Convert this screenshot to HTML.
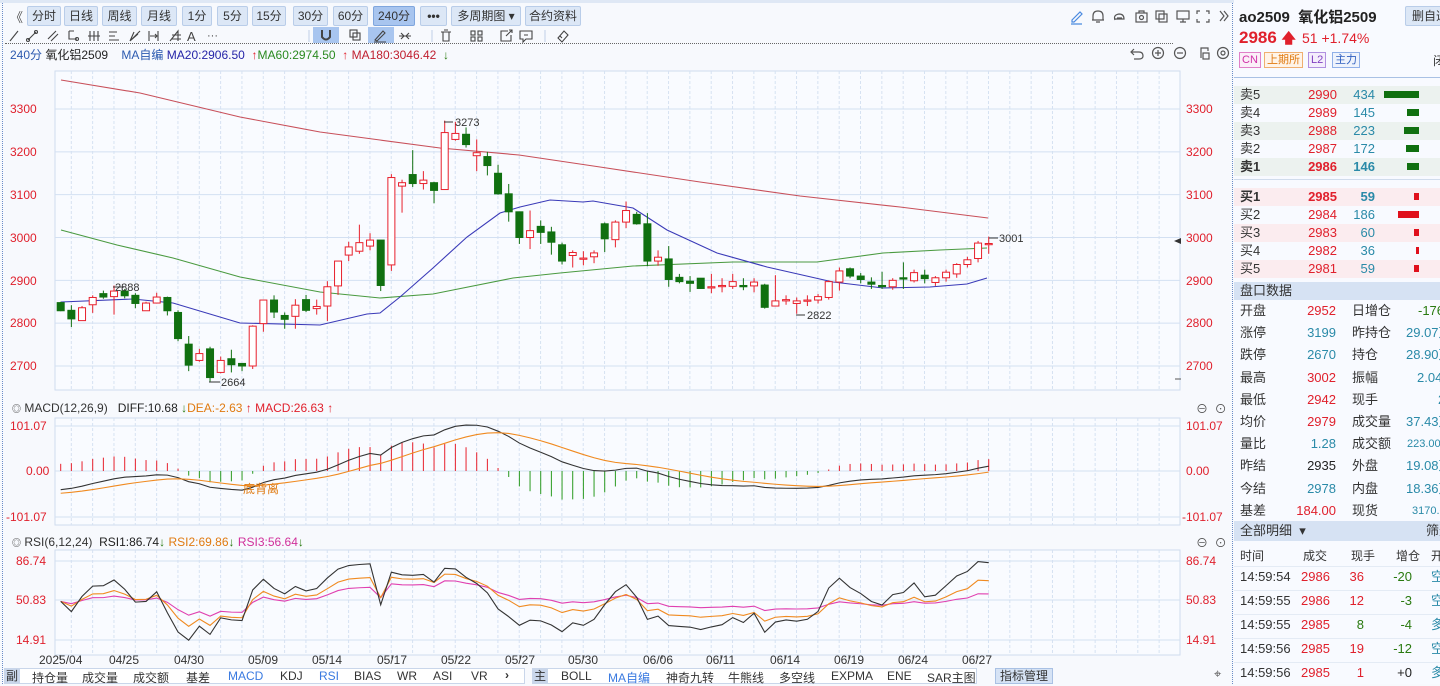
<!DOCTYPE html>
<html><head><meta charset="utf-8">
<style>
*{margin:0;padding:0;box-sizing:border-box}
body{width:1440px;height:684px;overflow:hidden;background:#f7f9fd;font-family:"Liberation Sans","Noto Sans CJK SC",sans-serif;font-size:12px;color:#333;position:relative}
.a{position:absolute;white-space:nowrap}
.btn{position:absolute;top:6px;height:20px;border:1px solid #b9cde9;background:#dce7f6;border-radius:2px;font-size:12px;line-height:18px;text-align:center;color:#333}
.on{background:#a8c5ef;border-color:#7fa6de}
.r{color:#e0202c}.g{color:#2a7a10}.b{color:#2a8aa8}.k{color:#222}
.rp{position:absolute;left:1234px;width:206px}
.row{position:absolute;left:0;width:206px;height:18px;font-size:13px;line-height:18px;overflow:hidden}
.row span{position:absolute;white-space:nowrap}
</style></head><body>
<div class="a" style="left:2px;top:0;width:0;height:684px;border-left:1px dotted #6a8cc8"></div>
<div class="a" style="left:1232px;top:0;width:0;height:684px;border-left:1px dotted #6a8cc8"></div>
<div class="a" style="left:0;top:0;width:1440px;height:3px;background:#dfe8f5"></div>

<div class="a" style="left:10px;top:7px;font-size:13px;color:#555">《</div>
<div class="btn" style="left:27px;width:34px">分时</div>
<div class="btn" style="left:64px;width:34px">日线</div>
<div class="btn" style="left:102px;width:35px">周线</div>
<div class="btn" style="left:141px;width:36px">月线</div>
<div class="btn" style="left:182px;width:30px">1分</div>
<div class="btn" style="left:217px;width:31px">5分</div>
<div class="btn" style="left:252px;width:34px">15分</div>
<div class="btn" style="left:293px;width:35px">30分</div>
<div class="btn" style="left:333px;width:35px">60分</div>
<div class="btn on" style="left:373px;width:42px">240分</div>
<div class="btn" style="left:420px;width:27px;font-weight:bold">•••</div>
<div class="btn" style="left:451px;width:70px">多周期图 ▾</div>
<div class="btn" style="left:525px;width:56px">合约资料</div>

<svg class="a" style="left:0;top:26px" width="620" height="18" stroke="#444" fill="none" stroke-width="1.1">
<rect x="313" y="1" width="26" height="16" fill="#a8c5ef" stroke="none"/>
<rect x="368" y="1" width="26" height="16" fill="#a8c5ef" stroke="none"/>
<path d="M10 15 L18 5"/>
<path d="M28 14 L36 6"/><circle cx="28" cy="14" r="1.5"/><circle cx="36" cy="6" r="1.5"/>
<path d="M48 13 L56 5 M51 15 L58 8"/>
<path d="M69 5 V13 H77 M69 5 H74"/><circle cx="77" cy="13" r="1.5"/>
<path d="M90 5 V15 M94 5 V15 M98 5 V15 M88 10 H100"/>
<path d="M109 6 H117 M109 10 H115 M109 14 H119"/>
<path d="M130 15 L140 5 M130 15 L138 8 M130 15 L134 6"/>
<path d="M149 5 V15 M150 10 H157 M158 5 V15 M155 8 L157 10 L155 12"/>
<path d="M170 15 L178 5 V15 M172 9 H181 M172 13 H181"/>
<text x="187" y="15" font-size="13" fill="#444" stroke="none">A</text>
<text x="207" y="13" font-size="11" fill="#444" stroke="none">···</text>
<path d="M322 4 V11 Q326 16 330 11 V4" stroke-width="2"/>
<rect x="350" y="4" width="7" height="7"/><rect x="353" y="7" width="7" height="7"/>
<path d="M375 14 L383 5 L385 7 L377 15 Z M374 16 H386"/>
<path d="M399 10 H411 M401 7 L404 10 L401 13 M409 7 L406 10 L409 13"/>
<path d="M441 6 H451 M443 6 V15 H449 V6 M444 4 H448"/>
<rect x="471" y="5" width="4" height="4"/><rect x="478" y="5" width="4" height="4"/><rect x="471" y="11" width="4" height="4"/><rect x="478" y="11" width="4" height="4"/>
<path d="M508 5 H501 V15 H511 V9 M506 10 L512 4 M509 4 H512 V7"/>
<path d="M520 5 H532 V13 H526 L523 16 V13 H520 Z M524 9 H528"/>
<path d="M558 12 L564 5 L568 9 L562 16 Z M560 10 L562 12"/>
<path d="M309 4 V16 M432 4 V16 M545 4 V16" stroke="#c5d3e8"/>
</svg>
<svg class="a" style="left:1060px;top:6px" width="175" height="20" stroke="#555" fill="none" stroke-width="1.2">
<path d="M12 14 L20 6 L22 8 L14 16 H12 Z M11 18 H22" stroke="#4a8ae0"/>
<path d="M33 14 V10 Q33 5 38 5 Q43 5 43 10 V14 H32 H44 M36 16 H40"/>
<path d="M55 14 Q53 9 59 8 Q64 8 64 13 H55 M57 12 H62"/>
<rect x="76" y="7" width="11" height="9"/><circle cx="81.5" cy="11.5" r="2"/><path d="M79 7 V5 H84 V7"/>
<rect x="96" y="5" width="8" height="8"/><rect x="99" y="8" width="8" height="8"/>
<rect x="117" y="5" width="12" height="8"/><path d="M120 16 H126 M123 13 V16"/>
<path d="M137 8 V5 H140 M146 5 H149 V8 M149 13 V16 H146 M140 16 H137 V13"/>
<path d="M160 5 L164 10 L160 15 M164 5 L168 10 L164 15"/>
</svg>
<div class="a" style="left:5px;top:43px;width:1168px;height:0;border-top:1px dotted #666"></div>

<div class="a" style="left:10px;top:46px;font-size:12px"><span style="color:#2c5ab0">240分</span> <span class="k">氧化铝2509</span>&nbsp;&nbsp;&nbsp; <span style="color:#2c5ab0">MA自编</span> <span style="color:#2424a8">MA20:2906.50</span> &nbsp;<span class="r">↑</span><span style="color:#2a8a20">MA60:2974.50</span> &nbsp;<span class="r">↑</span> <span style="color:#c02030">MA180:3046.42</span> &nbsp;<span class="g">↓</span></div>
<svg class="a" style="left:1125px;top:44px" width="110" height="18" stroke="#555" fill="none" stroke-width="1.2">
<path d="M9 5 L6 8 L9 11 M6 8 H14 Q18 8 18 12 Q18 15 14 15 H9"/>
<circle cx="33" cy="9" r="5.5"/><path d="M30 9 H36 M33 6 V12"/>
<circle cx="55" cy="9" r="5.5"/><path d="M52 9 H58"/>
<path d="M76 14 V4 H83 V7"/><rect x="78" y="9" width="6" height="6"/>
<circle cx="98" cy="9" r="5.5"/><circle cx="98" cy="9" r="2"/>
</svg>

<svg id="ch" class="a" style="left:0;top:0" width="1232" height="684" font-family="Liberation Sans, Noto Sans CJK SC, sans-serif" font-size="12">
<g id="grid"></g>
<g fill="#e0202c" font-size="12">
<text x="10" y="113">3300</text><text x="10" y="156">3200</text><text x="10" y="199">3100</text><text x="10" y="242">3000</text><text x="10" y="285">2900</text><text x="10" y="327">2800</text><text x="10" y="370">2700</text>
<text x="1186" y="113">3300</text><text x="1186" y="156">3200</text><text x="1186" y="199">3100</text><text x="1186" y="242">3000</text><text x="1186" y="285">2900</text><text x="1186" y="327">2800</text><text x="1186" y="370">2700</text>
<text x="10" y="430">101.07</text><text x="26" y="475">0.00</text><text x="6" y="521">-101.07</text>
<text x="1186" y="430">101.07</text><text x="1186" y="475">0.00</text><text x="1182" y="521">-101.07</text>
<text x="16" y="565">86.74</text><text x="16" y="604">50.83</text><text x="16" y="644">14.91</text>
<text x="1186" y="565">86.74</text><text x="1186" y="604">50.83</text><text x="1186" y="644">14.91</text>
</g>
<g id="plot"></g>
<g font-size="11" fill="#333">
<text x="455" y="126">3273</text><text x="115" y="291">2888</text><text x="221" y="386">2664</text><text x="807" y="319">2822</text><text x="999" y="242">3001</text>
<path d="M444 122 H453 M113 287 H124 M209 382 H220 M796 315 H805 M989 238 H998" stroke="#333"/>
</g>
<path d="M1174 241 L1181 238 V244 Z" fill="#333"/>
<path d="M1175 379 H1181" stroke="#555"/>
<text x="243" y="493" fill="#e07a10" font-size="12">底背离</text>
<g font-size="12" fill="#333">
<text x="39" y="664">2025/04</text><text x="109" y="664">04/25</text><text x="174" y="664">04/30</text><text x="248" y="664">05/09</text><text x="312" y="664">05/14</text><text x="377" y="664">05/17</text><text x="441" y="664">05/22</text><text x="505" y="664">05/27</text><text x="568" y="664">05/30</text><text x="643" y="664">06/06</text><text x="706" y="664">06/11</text><text x="770" y="664">06/14</text><text x="834" y="664">06/19</text><text x="898" y="664">06/24</text><text x="962" y="664">06/27</text>
</g>
</svg>

<div class="a" style="left:12px;top:401px;font-size:12px"><span style="font-size:9px">◎</span> MACD(12,26,9) &nbsp; <span class="k">DIFF:10.68</span> <span class="g">↓</span><span style="color:#e07a10">DEA:-2.63</span> <span class="r">↑</span> <span class="r">MACD:26.63</span> <span class="r">↑</span></div>
<div class="a" style="left:12px;top:535px;font-size:12px"><span style="font-size:9px">◎</span> RSI(6,12,24) &nbsp;<span class="k">RSI1:86.74</span><span class="g">↓</span> <span style="color:#e07a10">RSI2:69.86</span><span class="g">↓</span> <span style="color:#d0309a">RSI3:56.64</span><span class="g">↓</span></div>
<div class="a" style="left:1196px;top:400px;color:#555;font-size:12px">⊖ &nbsp;⊙</div>
<div class="a" style="left:1196px;top:534px;color:#555;font-size:12px">⊖ &nbsp;⊙</div>

<div class="a" style="left:4px;top:668px;width:521px;height:16px;background:#fff;border:1px solid #c9d6ea"></div>
<div class="a" style="left:4px;top:668px;width:16px;height:16px;background:#c9d6ea;text-align:center;line-height:16px">副</div>
<div class="a" style="left:32px;top:669px">持仓量</div>
<div class="a" style="left:82px;top:669px">成交量</div>
<div class="a" style="left:133px;top:669px">成交额</div>
<div class="a" style="left:186px;top:669px">基差</div>
<div class="a" style="left:228px;top:669px;color:#3a7ae0">MACD</div>
<div class="a" style="left:280px;top:669px">KDJ</div>
<div class="a" style="left:319px;top:669px;color:#3a7ae0">RSI</div>
<div class="a" style="left:354px;top:669px">BIAS</div>
<div class="a" style="left:397px;top:669px">WR</div>
<div class="a" style="left:433px;top:669px">ASI</div>
<div class="a" style="left:471px;top:669px">VR</div>
<div class="a" style="left:505px;top:668px;font-weight:bold">›</div>
<div class="a" style="left:532px;top:668px;width:445px;height:16px;background:#fff;border:1px solid #c9d6ea"></div>
<div class="a" style="left:532px;top:668px;width:16px;height:16px;background:#c9d6ea;text-align:center;line-height:16px">主</div>
<div class="a" style="left:561px;top:669px">BOLL</div>
<div class="a" style="left:608px;top:669px;color:#3a7ae0">MA自编</div>
<div class="a" style="left:666px;top:669px">神奇九转</div>
<div class="a" style="left:728px;top:669px">牛熊线</div>
<div class="a" style="left:779px;top:669px">多空线</div>
<div class="a" style="left:831px;top:669px">EXPMA</div>
<div class="a" style="left:887px;top:669px">ENE</div>
<div class="a" style="left:927px;top:669px">SAR主图</div>
<div class="a" style="left:995px;top:668px;width:58px;height:16px;background:#d6e3f5;border:1px solid #a9c1e4;text-align:center;line-height:15px">指标管理</div>
<div class="a" style="left:1214px;top:666px;font-size:13px;color:#555">⌖</div>

<div class="rp" style="top:0;height:684px;background:#f8faff"></div>
<div class="a" style="left:1239px;top:6px;font-size:15px;font-weight:bold;color:#222">ao2509 &nbsp;氧化铝2509</div>
<div class="a" style="left:1405px;top:6px;width:40px;height:20px;background:#dce7f6;border:1px solid #b9cde9;border-radius:2px;line-height:18px;padding-left:6px">删自选</div>
<div class="a" style="left:1239px;top:28px;font-size:17px;font-weight:bold;color:#e0202c">2986 <span style="font-size:14px">🡅</span></div>
<div class="a" style="left:1302px;top:30px;font-size:14px;color:#e0202c">51 +1.74%</div>
<div class="a" style="left:1239px;top:52px;height:16px;border:1px solid #e080c8;color:#d030a8;background:#fbeef8;padding:0 2px;font-size:11px;line-height:14px">CN</div>
<div class="a" style="left:1264px;top:52px;height:16px;border:1px solid #f0b070;color:#e07a10;background:#fff4e8;padding:0 2px;font-size:11px;line-height:14px">上期所</div>
<div class="a" style="left:1308px;top:52px;height:16px;border:1px solid #b090e0;color:#8040c0;background:#f4eefc;padding:0 2px;font-size:11px;line-height:14px">L2</div>
<div class="a" style="left:1332px;top:52px;height:16px;border:1px solid #90b0e8;color:#3060c0;background:#eef3fc;padding:0 2px;font-size:11px;line-height:14px">主力</div>
<div class="a" style="left:1433px;top:52px;font-size:12px">闭</div>
<div class="a" style="left:1234px;top:77px;width:206px;height:1px;background:#a9c1e4"></div>

<div id="book"></div>
<div class="a" style="left:1234px;top:282px;width:206px;height:18px;background:#d6e2f3;padding-left:6px;line-height:18px;font-size:13px">盘口数据</div>
<div id="data"></div>
<div class="a" style="left:1234px;top:521px;width:206px;height:20px;background:#d6e2f3;padding-left:6px;line-height:20px;font-size:13px">全部明细 &nbsp;▾<span style="position:absolute;left:192px">筛选</span></div>
<div class="a" style="left:1240px;top:547px;font-size:12px;color:#333">时间</div>
<div class="a" style="left:1303px;top:547px;font-size:12px;color:#333">成交</div>
<div class="a" style="left:1351px;top:547px;font-size:12px;color:#333">现手</div>
<div class="a" style="left:1396px;top:547px;font-size:12px;color:#333">增仓</div>
<div class="a" style="left:1431px;top:547px;font-size:12px;color:#333">开</div>
<div id="trades"></div>

<script>
const D=[[2848,2829,2850,2828],[2830,2810,2842,2791],[2806,2836,2840,2806],[2843,2860,2865,2824],[2869,2861,2876,2857],[2862,2875,2888,2820],[2875,2864,2880,2858],[2865,2846,2870,2835],[2829,2847,2850,2829],[2847,2861,2871,2846],[2860,2829,2862,2818],[2825,2764,2830,2758],[2751,2702,2770,2688],[2713,2729,2740,2710],[2740,2673,2745,2664],[2685,2713,2722,2683],[2717,2703,2738,2685],[2706,2700,2706,2688],[2700,2793,2795,2693],[2799,2854,2855,2780],[2854,2826,2865,2812],[2818,2809,2825,2787],[2816,2842,2856,2787],[2855,2830,2866,2826],[2834,2839,2855,2820],[2840,2885,2898,2805],[2887,2945,2945,2866],[2959,2978,2990,2945],[2968,2988,3030,2962],[2980,2994,3010,2970],[2994,2888,2994,2875],[2936,3140,3148,2922],[3120,3128,3135,3058],[3147,3126,3204,3118],[3126,3134,3155,3112],[3128,3110,3130,3080],[3112,3245,3273,3112],[3229,3243,3270,3226],[3241,3217,3257,3210],[3191,3198,3229,3155],[3189,3168,3200,3145],[3150,3102,3170,3100],[3102,3060,3125,3037],[3060,3000,3060,2985],[3000,3016,3063,2973],[3026,3012,3040,2985],[3013,2989,3025,2960],[2983,2945,2988,2937],[2958,2965,2970,2930],[2950,2952,2968,2935],[2955,2964,2970,2940],[3032,2997,3035,2966],[2995,3036,3040,2977],[3036,3063,3084,3022],[3054,3032,3060,3030],[3032,2945,3057,2933],[2945,2954,2970,2934],[2950,2902,2980,2885],[2907,2897,2915,2893],[2898,2893,2910,2873],[2905,2881,2905,2880],[2883,2885,2915,2870],[2886,2888,2905,2872],[2886,2897,2915,2880],[2888,2885,2905,2877],[2887,2896,2905,2872],[2889,2837,2892,2834],[2840,2852,2912,2840],[2852,2855,2865,2843],[2846,2852,2860,2822],[2852,2854,2865,2840],[2854,2862,2868,2846],[2860,2897,2900,2855],[2896,2922,2930,2876],[2927,2910,2930,2905],[2910,2902,2917,2893],[2896,2891,2907,2880],[2888,2886,2920,2880],[2885,2900,2905,2878],[2906,2903,2942,2880],[2899,2918,2925,2895],[2912,2904,2925,2893],[2895,2906,2910,2887],[2906,2919,2925,2897],[2915,2937,2940,2906],[2937,2948,2955,2930],[2951,2987,2992,2942],[2985,2986,3002,2962]];
const X=i=>60.7+i*10.667, Y=p=>366-(p-2700)*0.4283;
let g='',p='';
[[71,390],[418,525],[550,655]].forEach(([t,b])=>{
 g+=`<rect x="55" y="${t}" width="1125" height="${b-t}" fill="#f9fbff" stroke="#cfdcee"/>`;
 for(let x=71.3;x<1180;x+=21.33) g+=`<line x1="${x}" y1="${t}" x2="${x}" y2="${b}" stroke="#d6e2f2" stroke-dasharray="3,2"/>`;
});
[3300,3200,3100,3000,2900,2800,2700].forEach(v=>g+=`<line x1="55" x2="1180" y1="${Y(v)}" y2="${Y(v)}" stroke="#d3e0f2"/>`);
[426,471,517,561,600,640].forEach(v=>g+=`<line x1="55" x2="1180" y1="${v}" y2="${v}" stroke="#d3e0f2"/>`);
[60,124,189,263,327,392,456,520,583,662,721,785,849,913,977].forEach(x=>g+=`<line x1="${x}" x2="${x}" y1="655" y2="659" stroke="#555"/>`);
document.getElementById('grid').innerHTML=g;
const pl=(pts,c)=>`<polyline fill="none" stroke="${c}" stroke-width="1.1" points="${pts}"/>`;
p+=pl("61,80 140,93 240,117 320,132 380,140 440,148 519,155 600,167 700,182 800,196 900,207 988,218","#c8505a");
p+=pl("61,230 117,245 173,258 240,277 320,292 380,298 433,294 513,278 560,273 633,266 733,262 817,262 883,253 940,250 987,248","#4a9a40");
p+=pl("61,302 133,299 173,303 240,323 320,325 367,314 380,313 400,297 433,268 467,237 500,213 520,207 550,200 583,202 593,201 633,208 667,230 717,253 767,267 833,282 883,288 930,287 967,284 987,278","#3a3ab8");
D.forEach((d,i)=>{const [o,c,h,l]=d,x=X(i),up=c>=o,col=up?'#e8202c':'#107010';
 const t=Y(Math.max(o,c)),b=Y(Math.min(o,c)),hh=Math.max(b-t,1.2);
 p+=`<line x1="${x}" x2="${x}" y1="${Y(h)}" y2="${Y(l)}" stroke="${col}"/>`;
 p+= up?`<rect x="${x-3.5}" y="${t}" width="7" height="${hh}" fill="#fff" stroke="${col}"/>`:`<rect x="${x-3.5}" y="${t}" width="7" height="${hh}" fill="${col}" stroke="${col}"/>`;
});
const cl=D.map(d=>d[1]);
let e12=cl[0]-20,e26=cl[0]+27,dea=-52,dif=[],de=[],mh=[];
cl.forEach(c=>{e12=e12*11/13+c*2/13;e26=e26*25/27+c*2/27;const df=e12-e26;dea=dea*0.8+df*0.2;dif.push(df);de.push(dea);mh.push(2*(df-dea));});
const MY=v=>471-v*45/101.07;
mh.forEach((v,i)=>{p+=`<line x1="${X(i)}" x2="${X(i)}" y1="471" y2="${MY(v)}" stroke="${v>=0?'#e8202c':'#2a9a20'}"/>`});
p+=pl(dif.map((v,i)=>X(i)+','+MY(v)).join(' '),'#333');
p+=pl(de.map((v,i)=>X(i)+','+MY(v)).join(' '),'#f08a20');
const RY=v=>Math.max(552,640-(v-14.91)/(71.83)*79);
function rsi2(n){let u=10,dn=10,out=[];for(let i=0;i<cl.length;i++){const ch=i?cl[i]-cl[i-1]:0;u=(u*(n-1)+Math.max(ch,0))/n;dn=(dn*(n-1)+Math.max(-ch,0))/n;out.push(100*u/(u+dn));}return out;}
p+=pl(rsi2(24).map((v,i)=>X(i)+','+RY(v)).join(' '),'#e040b0');
p+=pl(rsi2(12).map((v,i)=>X(i)+','+RY(v)).join(' '),'#f08a20');
p+=pl(rsi2(6).map((v,i)=>X(i)+','+RY(v)).join(' '),'#333');
document.getElementById('plot').innerHTML=p;

let bk='';
const sells=[['卖5',2990,434,75],['卖4',2989,145,17],['卖3',2988,223,26],['卖2',2987,172,20],['卖1',2986,146,17]];
const buys=[['买1',2985,59,5],['买2',2984,186,21],['买3',2983,60,5],['买4',2982,36,3],['买5',2981,59,5]];
sells.forEach((r,i)=>{const t=86+i*18,bold=i==4?'font-weight:bold;':'';
 bk+=`<div class="row" style="left:1234px;top:${t}px;background:${i%2==0||i==4?'#ecf2ef':'transparent'};${bold}"><span style="left:6px">${r[0]}</span><span class="r" style="right:103px">${r[1]}</span><span class="b" style="right:65px">${r[2]}</span><span style="right:21px;top:5px;height:7px;width:${r[3]/2.5+5}px;background:#107010"></span></div>`;});
bk+=`<div class="a" style="left:1234px;top:179px;width:206px;height:1px;background:#d0dcec"></div>`;
buys.forEach((r,i)=>{const t=188+i*18,bold=i==0?'font-weight:bold;':'';
 bk+=`<div class="row" style="left:1234px;top:${t}px;background:${i%2==0?'#fbecef':'transparent'};${bold}"><span style="left:6px">${r[0]}</span><span class="r" style="right:103px">${r[1]}</span><span class="b" style="right:65px">${r[2]}</span><span style="right:21px;top:5px;height:7px;width:${r[3]}px;background:#e0101c"></span></div>`;});
document.getElementById('book').innerHTML=bk;
const dd=[['开盘','2952','r','日增仓','-176','g'],['涨停','3199','b','昨持仓','29.07万','b'],['跌停','2670','b','持仓','28.90万','b'],['最高','3002','r','振幅','2.049','b'],['最低','2942','r','现手','2','b'],['均价','2979','r','成交量','37.43万','b'],['量比','1.28','b','成交额','223.00亿','b'],['昨结','2935','k','外盘','19.08万','b'],['今结','2978','b','内盘','18.36万','b'],['基差','184.00','r','现货','3170.0','b']];
const lf=[184,172,172,183,204,172,173,172,172,178];
let ds='';dd.forEach((r,i)=>{const t=302+i*22.2;ds+=`<div class="row" style="left:1234px;top:${t}px"><span style="left:6px">${r[0]}</span><span class="${r[2]}" style="right:104px">${r[1]}</span><span style="left:118px">${r[3]}</span><span class="${r[5]}" style="left:${lf[i]}px;${i==6||i==9?'font-size:11px':''}">${r[4]}</span></div>`;});
document.getElementById('data').innerHTML=ds;
const tr=[['14:59:54','2986','36','r','-20','g','空'],['14:59:55','2986','12','r','-3','g','空'],['14:59:55','2985','8','g','-4','g','多'],['14:59:56','2985','19','r','-12','g','空'],['14:59:56','2985','1','r','+0','k','多']];
let ts='';tr.forEach((r,i)=>{const t=568+i*24;ts+=`<div class="a" style="left:1234px;top:${t-2}px;width:206px;height:23px;border-top:1px solid #e4ebf5"></div><div class="row" style="left:1234px;top:${t}px"><span style="left:6px">${r[0]}</span><span class="r" style="left:67px">${r[1]}</span><span class="${r[3]}" style="right:76px">${r[2]}</span><span class="${r[5]}" style="right:28px">${r[4]}</span><span class="b" style="left:197px">${r[6]}</span></div>`;});
document.getElementById('trades').innerHTML=ts;
</script>
</body></html>
